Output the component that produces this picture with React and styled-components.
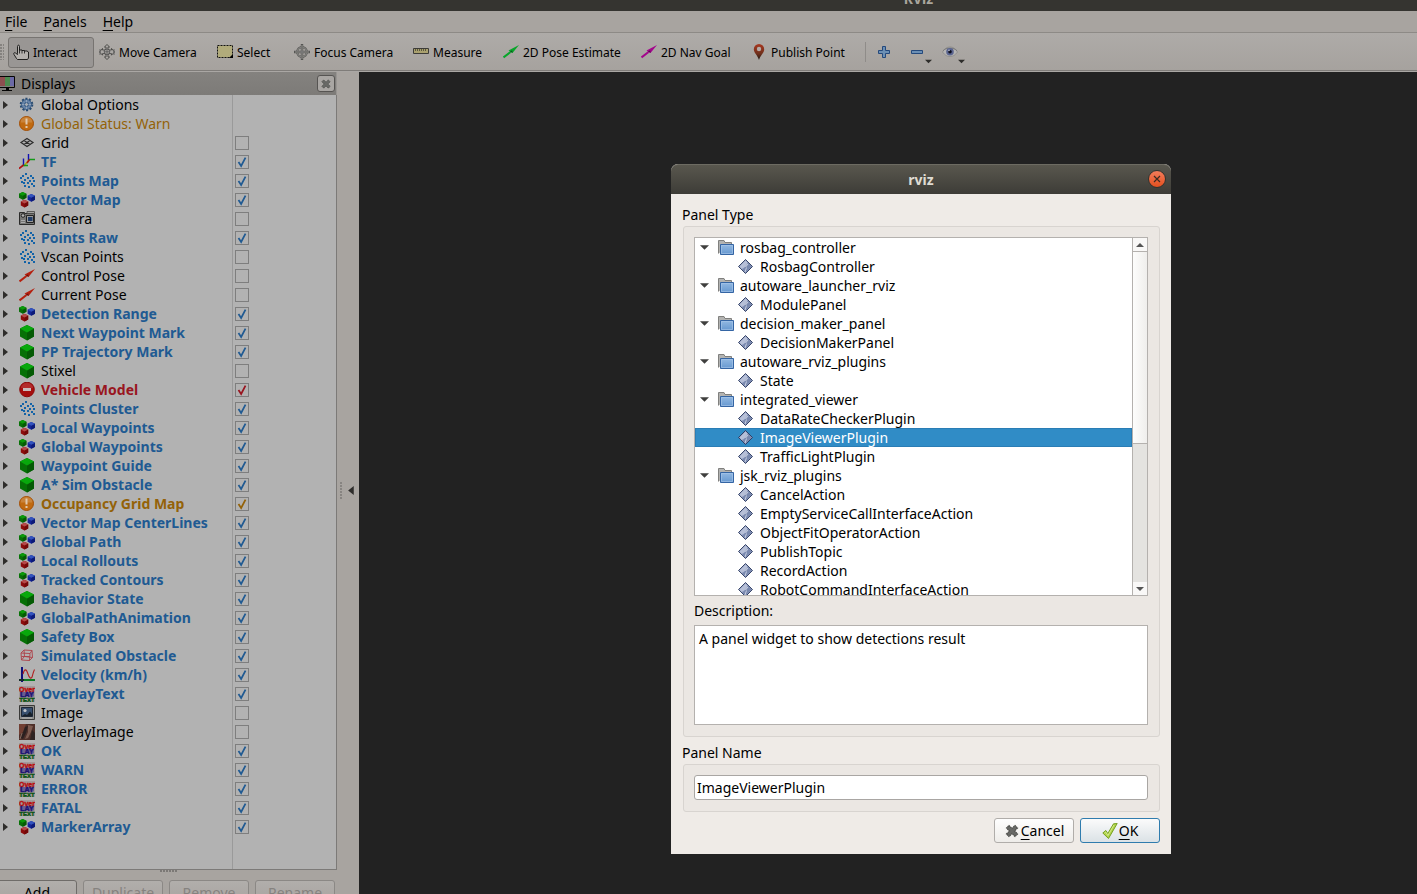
import React, { useState } from 'react';
import styled, { createGlobalStyle, css } from 'styled-components';

const GlobalStyle = createGlobalStyle`
  *,
  *:before,
  *:after {
    box-sizing: border-box;
  }

  body {
    margin: 0;
    overflow: hidden;
    background: #222;
    color: #000;
    font-family: 'Noto Sans', 'Open Sans', sans-serif;
    font-size: 14px;
    line-height: 19px;
  }

  button,
  input,
  textarea {
    color: inherit;
    font: inherit;
  }

  ul {
    margin: 0;
    padding: 0;
    list-style: none;
  }

  svg {
    display: block;
    flex: none;
  }
`;

const Icon = ({ size = 16, children, ...props }) => (
  <svg width={size} height={size} viewBox="0 0 16 16" fill="none" aria-hidden="true" {...props}>
    {children}
  </svg>
);

/* Toolbar icons */

const HandIcon = () => (
  <Icon>
    <path
      d="M4.500 9.500v-7c0-1.800 2-1.800 2 0V6h2.500v.5h2.500V7H14l1.500 1v6l-1 1.500H4.500l-1-1L1 10.500c-.8-1.500.3-2.200 1.500-1.500l2 1.500z"
      fill="#b4b1ae"
      stroke="#111"
      strokeWidth=".9"
    />
    <path d="M6.500 6v3.500M9 6.500v3M11.500 7v2.500" stroke="#111" strokeWidth=".8" />
  </Icon>
);

const MoveIcon = () => (
  <Icon>
    <path
      d="M8 .5 10.600 3H9v2.200l1 .8h2.500V4.400L15.500 8l-3 3.200V9.600H10L9 11v2h1.600L8 15.500 5.400 13H7v-2L6 9.600H3.500v1.600L.5 8l3-3.600V6H6l1-.8V3H5.400z"
      fill="#aaa7a4"
      stroke="#484846"
      strokeWidth=".9"
    />
    <circle cx="8" cy="7.800" r="2.800" stroke="#555" strokeWidth=".8" />
    <path d="M1 5v6M15 5v6M5 7.800h6M8 5v6" stroke="#555" strokeWidth=".8" />
  </Icon>
);

const SelectIcon = () => (
  <Icon>
    <path d="M.5 1.500h15v12H.5z" fill="#b1ab7b" stroke="#111" strokeDasharray="2 1" />
    <path d="M16 10v4h-4z" fill="#000" />
  </Icon>
);

const FocusIcon = () => (
  <Icon>
    <circle cx="8" cy="8" r="4.800" stroke="#555553" strokeWidth="2.200" />
    <circle cx="8" cy="8" r="4.800" stroke="#a6a4a1" strokeWidth=".8" />
    <path d="M8 0v16M0 8h16" stroke="#555553" strokeWidth="2.400" />
    <path d="M8 1v14M1 8h14" stroke="#a6a4a1" strokeWidth=".8" />
    <circle cx="8" cy="8" r="1.600" fill="#777" />
  </Icon>
);

const RulerIcon = () => (
  <Icon>
    <path d="M.5 4.500h15v5H.5z" fill="#aaa16f" stroke="#3d3c38" />
    <path d="M2.500 5v2M4.500 5v2M6.500 5v2M8.500 5v2M10.500 5v2M12.500 5v2" stroke="#5b583f" />
  </Icon>
);

const PoseIcon = ({ color, dark }) => (
  <Icon>
    <path d="m.5 13.500 7-5.500" stroke={color} strokeWidth="2" />
    <path d="M5.500 6.500 16 1 9.500 9z" fill={color} />
    <path d="m6.800 7.200 2.400-.7.300 2.500z" fill={dark} />
  </Icon>
);

const PinIcon = () => (
  <Icon>
    <defs>
      <linearGradient id="pin" x1="0" y1="0" x2="0" y2="1">
        <stop offset="0" stopColor="#a8371f" />
        <stop offset=".6" stopColor="#70301c" />
        <stop offset="1" stopColor="#1c1a15" />
      </linearGradient>
    </defs>
    <path d="M8 0a5.200 5.200 0 0 0-5.200 5.200C2.800 9 6.400 10.800 8 16c1.600-5.200 5.200-7 5.200-10.800A5.200 5.200 0 0 0 8 0z" fill="url(#pin)" />
    <circle cx="8" cy="5" r="2.200" fill="#b4aba7" />
  </Icon>
);

const PlusIcon = () => (
  <Icon>
    <path d="M6.500 2.500h3v4h4v3h-4v4h-3v-4h-4v-3h4z" fill="#6b8fb4" stroke="#24497c" />
  </Icon>
);

const MinusIcon = () => (
  <Icon>
    <path d="M2.500 6.500h11v3h-11z" fill="#6b8fb4" stroke="#24497c" />
  </Icon>
);

const EyeIcon = () => (
  <Icon>
    <path d="M.5 8C3 4 5.500 3 8 3s5 1 7.500 5C13 11.500 10.500 12.500 8 12.500S3 11.500.5 8z" fill="#b5b4b3" stroke="#8a8987" strokeWidth=".8" />
    <path d="M1 6.800C4 3.200 12 3.200 15 6.800" stroke="#777" />
    <circle cx="8" cy="7.800" r="3.800" fill="#5a648f" />
    <circle cx="8" cy="7.800" r="1.800" fill="#0c0d1c" />
    <circle cx="7" cy="6.400" r=".8" fill="#b4b9cb" />
  </Icon>
);

/* Display icons */

const MonitorIcon = () => (
  <Icon>
    <path d="M0 1h5v9H0z" fill="#8d4f50" />
    <path d="M5 1h5v9H5z" fill="#4c8b50" />
    <path d="M10 1h5v9h-5z" fill="#6b69a5" />
    <path d="M-1 .5h15.500v11H-1" stroke="#050505" />
    <path d="M6 12h3v2H6z" fill="#050505" />
    <path d="M2 14.500h10" stroke="#050505" />
  </Icon>
);

const GearIcon = () => (
  <Icon>
    <circle cx="7.500" cy="7.500" r="5.600" stroke="#27496f" strokeWidth="2.400" strokeDasharray="2 1.520" />
    <circle cx="7.500" cy="7.500" r="5" fill="#6783a6" stroke="#31557f" strokeWidth=".8" />
    <circle cx="7.500" cy="7.500" r="2" fill="#a8adb3" stroke="#31557f" />
    <path d="M7.500 3v2.500M7.500 9.500V12M3 7.500h2.500M9.500 7.500H12" stroke="#9fb0c4" strokeWidth=".7" />
  </Icon>
);

const WarnIcon = () => (
  <Icon>
    <circle cx="7.500" cy="7.500" r="7" fill="#c06a10" stroke="#a34f05" />
    <path d="M1.500 6.500a6 5.500 0 0 1 12 0z" fill="#c98339" />
    <path d="M7.500 2.500v6M7.500 10v2" stroke="#e0c9b0" strokeWidth="2" />
  </Icon>
);

const ErrorIcon = () => (
  <Icon>
    <circle cx="8" cy="7.500" r="7.300" fill="#a50e0e" stroke="#8b0909" />
    <path d="M2 6a6 5 0 0 1 12 0z" fill="#b32b2b" />
    <path d="M4 6h8v3H4z" fill="#c9bcbc" />
  </Icon>
);

const GridIcon = () => (
  <Icon>
    <path d="M8 3.500 14 7.500 8 11.500 2 7.500zM5 5.500l6 4M11 5.500l-6 4" stroke="#2b2b2b" strokeWidth="1.200" />
  </Icon>
);

const AxesIcon = () => (
  <Icon>
    <path d="m10 6-5 6" stroke="#b4a800" strokeWidth="1.600" />
    <path d="M4.500 11V4.500M9.500 6V0" stroke="#1112b5" strokeWidth="1.400" />
    <path d="M10 5.500h6M4 11.500h5" stroke="#149a18" strokeWidth="1.400" />
    <path d="M4.500 11 0 14.500M10.500 5.500 8 9" stroke="#b01010" strokeWidth="1.600" />
  </Icon>
);

const POINTS = [
  [6, 0], [3, 2], [11, 2], [1, 4], [8, 4], [13, 4], [5, 6], [10, 7],
  [2, 8], [14, 7], [4, 9], [8, 9], [12, 10], [5, 12], [9, 13], [14, 12],
];

const PointsIcon = () => (
  <Icon>
    {POINTS.map(([x, y]) => (
      <rect key={`${x}-${y}`} x={x} y={y} width="2" height="2" fill="#1263a8" />
    ))}
  </Icon>
);

const Hexagon = ({ x, y, top, left, right }) => (
  <g transform={`translate(${x} ${y})`}>
    <path d="M0-3.800 3.700-2v4L0 4-3.700 2v-4z" fill={left} />
    <path d="M0 0 3.700-2v4L0 4z" fill={right} />
    <path d="M0-3.800 3.700-2 0 0l-3.700-2z" fill={top} />
  </g>
);

const MarkersIcon = () => (
  <Icon>
    <Hexagon x={3.7} y={3.8} top="#0a9a0a" left="#087008" right="#055a05" />
    <Hexagon x={12.3} y={5.8} top="#3353bd" left="#14259a" right="#0c1a78" />
    <Hexagon x={5.5} y={11.6} top="#b44a4a" left="#8c0c0c" right="#730808" />
  </Icon>
);

const CubeIcon = () => (
  <Icon>
    <path d="M8 0 15 3.500v8L8 15.500l-7-4v-8z" fill="#067006" />
    <path d="M8 7.500 15 3.500v8L8 15.500z" fill="#045a04" />
    <path d="M8 0 15 3.500 8 7.500 1 3.500z" fill="#08a80c" />
  </Icon>
);

const CameraIcon = () => (
  <Icon>
    <path d="M.5 1.500h5v1h10v11H.5z" fill="#777775" stroke="#2b2b2a" />
    <path d="M8 .5h7.500v2H8z" fill="#a3a3a1" stroke="#444" strokeWidth=".8" />
    <circle cx="4" cy="4.500" r="1.800" fill="#b5b5b3" stroke="#222" />
    <path d="M7.500 4.500h7v7h-7z" fill="#999" stroke="#222" />
    <path d="M9 6h4.500v4H9z" fill="#1f3b66" />
    <path d="M2 9.500h4M2 11.500h4" stroke="#aaa" />
  </Icon>
);

const WireBoxIcon = () => (
  <Icon>
    <path
      d="m2 5 3-3 8 .5-2 3zM2 5l.5 7 8 .5.5-7M13 2.500l.5 7-3 3M5 2l.5 6.500 8 1M5.500 8.500l-3 3.500M2.500 8.500h8"
      stroke="#ad3e46"
      strokeWidth=".9"
    />
  </Icon>
);

const PlotIcon = () => (
  <Icon>
    <path d="M0 13h16" stroke="#0b7c23" strokeWidth="2" />
    <path d="M3 0v15" stroke="#10107a" strokeWidth="2" />
    <path d="M0 12h5v2H0z" fill="#142a2a" />
    <path d="M4 7c1.500-6 3.500-5 5 0s3.500 5.500 4.500 1.500c.6-2.300 1-4 2-6" stroke="#b02222" strokeWidth="1.100" />
  </Icon>
);

const OverlayTextIcon = () => (
  <Icon fontFamily="Liberation Sans, sans-serif" fontWeight="700" textAnchor="middle" strokeWidth=".4">
    <path d="M0 0h16v16H0z" fill="#a39a9a" />
    <path d="M1 6h14v4.500H1z" fill="#6a5c90" />
    <text x="8" y="5.500" fontSize="7" fill="#b80d0d" stroke="#b80d0d">Over</text>
    <text x="8" y="10.700" fontSize="7" fill="#1c1272" stroke="#1c1272">LAY</text>
    <text x="8" y="15.700" fontSize="6" fill="#0b5513" stroke="#0b5513">TEXT</text>
  </Icon>
);

const ImageIcon = () => (
  <Icon>
    <path d="M.5.500h15v14H.5z" fill="#8f8f8d" stroke="#3a3a38" />
    <path d="M2.500 2.500h11v9h-11z" fill="#38506f" stroke="#1d2736" />
    <circle cx="6" cy="5.500" r="1.600" fill="#c0c4c8" />
    <path d="m3 11 3-2 2 1 3-3.500L13 9v2z" fill="#17202a" />
    <path d="M3 13h10" stroke="#b5b5b5" />
  </Icon>
);

const PhotoIcon = () => (
  <Icon>
    <path d="M0 0h16v16H0z" fill="#4e2f29" />
    <path d="M0 0h7L4 8l-4 3z" fill="#713f33" />
    <path d="m9 1 5 1-2 6-3 6-3 1 3-7z" fill="#7d5b50" />
    <path d="m6 3 3-1-2 7-3 6-2-1z" fill="#2b2020" />
    <path d="m13 6 3 3v7h-5z" fill="#2f2322" />
    <path d="M3 9 1 15" stroke="#80665b" />
  </Icon>
);

/* Dialog icons */

const FolderIcon = () => (
  <Icon>
    <defs>
      <linearGradient id="folder" x1="0" y1="0" x2="0" y2="1">
        <stop offset="0" stopColor="#93b9e2" />
        <stop offset="1" stopColor="#6698d0" />
      </linearGradient>
    </defs>
    <path d="M.5 13.500V.5H6l1 2h6.500v3" fill="#b3b3b1" stroke="#80807e" />
    <path d="M2.500 4.500h13v10h-13z" fill="url(#folder)" stroke="#3465a4" />
    <path d="M3.500 5.500h11v8h-11z" stroke="#a9c8e9" strokeWidth=".6" />
  </Icon>
);

const DiamondIcon = () => (
  <Icon>
    <path d="m7.500.500 7 7-7 7-7-7z" fill="#8896ba" stroke="#28375c" strokeWidth=".9" />
    <path d="m7.500 1.500 2 2-1 4-5 2.500-2-2.500z" fill="#b7c0d8" />
    <path d="m10 4-5.500 7 3 2.500 6-6z" fill="#7282a9" opacity=".7" />
    <path d="m7.500 8 2.500-3M7 13l1.500-4.500" stroke="#dbe0ec" strokeWidth=".8" />
  </Icon>
);

const CrossIcon = props => (
  <Icon {...props}>
    <path
      d="m5 2.500 3 3 3-3L13.500 5l-3 3 3 3-2.500 2.500-3-3-3 3L2.500 11l3-3-3-3z"
      fill="#686966"
      stroke="#4c4d4a"
      strokeWidth="1.200"
      strokeDasharray="1.500 .5"
    />
  </Icon>
);

const ApplyIcon = () => (
  <Icon>
    <path d="m.8 10 3-2.500 2 3L11.500.8l3.700-.3-8.700 15z" fill="#b0d348" stroke="#6c9a16" strokeWidth=".9" />
    <path d="m2.500 10 1.200-1 2.200 3.500L12 2" stroke="#dcefa0" strokeWidth=".8" />
  </Icon>
);

const ArrowIcon = ({ d, size = 8, color = '#2e2d2b' }) => (
  <svg width={size} height={size} viewBox="0 0 8 8" aria-hidden="true">
    <path d={d} fill={color} />
  </svg>
);

const RIGHT = 'M1 0v8l5-4z';
const LEFT = 'M6 0v8L1 4z';
const UP = 'M0 6h8L4 2z';
const DOWN = 'M0 2h8L4 6z';

/* Data */

const TOOLS = [
  { label: 'Interact', icon: <HandIcon />, width: 86, active: true },
  { label: 'Move Camera', icon: <MoveIcon />, width: 118 },
  { label: 'Select', icon: <SelectIcon />, width: 77 },
  { label: 'Focus Camera', icon: <FocusIcon />, width: 119 },
  { label: 'Measure', icon: <RulerIcon />, width: 90 },
  { label: '2D Pose Estimate', icon: <PoseIcon color="#08a62a" dark="#0b5a1c" />, width: 138 },
  { label: '2D Nav Goal', icon: <PoseIcon color="#a3058c" dark="#5b0450" />, width: 110 },
  { label: 'Publish Point', icon: <PinIcon />, width: 114 },
];

const DISPLAYS = [
  ['Global Options', GearIcon, null],
  ['Global Status: Warn', WarnIcon, null, 'warn'],
  ['Grid', GridIcon, false],
  ['TF', AxesIcon, true],
  ['Points Map', PointsIcon, true],
  ['Vector Map', MarkersIcon, true],
  ['Camera', CameraIcon, false],
  ['Points Raw', PointsIcon, true],
  ['Vscan Points', PointsIcon, false],
  ['Control Pose', 'pose', false],
  ['Current Pose', 'pose', false],
  ['Detection Range', MarkersIcon, true],
  ['Next Waypoint Mark', CubeIcon, true],
  ['PP Trajectory Mark', CubeIcon, true],
  ['Stixel', CubeIcon, false],
  ['Vehicle Model', ErrorIcon, true, 'error'],
  ['Points Cluster', PointsIcon, true],
  ['Local Waypoints', MarkersIcon, true],
  ['Global Waypoints', MarkersIcon, true],
  ['Waypoint Guide', CubeIcon, true],
  ['A* Sim Obstacle', CubeIcon, true],
  ['Occupancy Grid Map', WarnIcon, true, 'warn'],
  ['Vector Map CenterLines', MarkersIcon, true],
  ['Global Path', MarkersIcon, true],
  ['Local Rollouts', MarkersIcon, true],
  ['Tracked Contours', MarkersIcon, true],
  ['Behavior State', CubeIcon, true],
  ['GlobalPathAnimation', MarkersIcon, true],
  ['Safety Box', CubeIcon, true],
  ['Simulated Obstacle', WireBoxIcon, true],
  ['Velocity (km/h)', PlotIcon, true],
  ['OverlayText', OverlayTextIcon, true],
  ['Image', ImageIcon, false],
  ['OverlayImage', PhotoIcon, false],
  ['OK', OverlayTextIcon, true],
  ['WARN', OverlayTextIcon, true],
  ['ERROR', OverlayTextIcon, true],
  ['FATAL', OverlayTextIcon, true],
  ['MarkerArray', MarkersIcon, true],
].map(([name, icon, enabled, status]) => ({ name, icon, enabled, status }));

const PACKAGES = [
  { name: 'rosbag_controller', panels: ['RosbagController'] },
  { name: 'autoware_launcher_rviz', panels: ['ModulePanel'] },
  { name: 'decision_maker_panel', panels: ['DecisionMakerPanel'] },
  { name: 'autoware_rviz_plugins', panels: ['State'] },
  {
    name: 'integrated_viewer',
    panels: ['DataRateCheckerPlugin', 'ImageViewerPlugin', 'TrafficLightPlugin'],
  },
  {
    name: 'jsk_rviz_plugins',
    panels: [
      'CancelAction',
      'EmptyServiceCallInterfaceAction',
      'ObjectFitOperatorAction',
      'PublishTopic',
      'RecordAction',
      'RobotCommandInterfaceAction',
    ],
  },
];

const STATUS_COLORS = { ok: '#205a92', warn: '#946208', error: '#991520' };

/* Main window */

const StyledWindow = styled.div`
  display: flex;
  flex-direction: column;
  height: 100vh;
  overflow: hidden;
`;

const TitleStrip = styled.header`
  display: flex;
  align-items: flex-end;
  justify-content: center;
  height: 11px;
  padding: 0 0 4px 420px;
  overflow: hidden;
  background: #353430;
  color: #aaa69d;
  font-weight: 700;
  line-height: 16px;
`;

const MenuBar = styled.nav`
  display: flex;
  gap: 16px;
  height: 22px;
  padding: 0 5px;
  border-bottom: 1px solid #8d8a86;
  background: #a8a4a0;
`;

const MenuItem = styled.button`
  padding: 0;
  border: 0;
  background: none;
`;

const Mnemonic = styled.span`
  text-decoration: underline;
  text-decoration-thickness: 1px;
  text-underline-offset: 3px;
`;

const Toolbar = styled.div`
  display: flex;
  align-items: center;
  height: 38px;
  padding-top: 1px;
  border-bottom: 1px solid #7f7c79;
  background: linear-gradient(#aeaba8, #a6a29e);
`;

const ToolbarGrip = styled.span`
  width: 4px;
  height: 16px;
  margin-right: 4px;
  background: radial-gradient(circle at 1px 1px, #85827f 1px, transparent 1px) 0 0 / 3px 3px;
`;

const ToolButton = styled.button`
  display: flex;
  align-items: center;
  gap: 4px;
  flex: none;
  width: ${({ $width }) => $width}px;
  height: 31px;
  padding: 0 4px;
  border: 1px solid transparent;
  border-radius: 3px;
  background: none;
  font-size: 12px;
  white-space: nowrap;

  ${({ $active }) =>
    $active &&
    css`
      border-color: #777471;
      background: #999694;
    `}
`;

const ToolSeparator = styled.span`
  width: 1px;
  height: 20px;
  margin: 0 6px 0 5px;
  background: #8f8c89;
`;

const IconButton = styled.button`
  display: flex;
  align-items: flex-end;
  width: 33px;
  padding: 0 0 0 4px;
  border: 0;
  background: none;

  > svg + svg {
    margin-bottom: -5px;
  }
`;

const Workspace = styled.main`
  display: flex;
  flex: 1;
  min-height: 0;
  border-top: 1px solid #aaa7a4;
`;

/* Displays panel */

const DisplaysPanel = styled.section`
  display: flex;
  flex-direction: column;
  width: 337px;
  flex: none;
  background: #a8a4a0;
`;

const PanelHeader = styled.div`
  display: flex;
  align-items: center;
  gap: 5px;
  height: 23px;
  flex: none;
  padding-right: 1px;
  border-right: 1px solid #989592;
  background: linear-gradient(#84827f, #7d7b78);
`;

const PanelTitle = styled.h2`
  flex: 1;
  margin: 0;
  font-size: 14px;
  font-weight: 400;
`;

const PanelClose = styled.button`
  display: grid;
  place-items: center;
  width: 18px;
  height: 17px;
  padding: 0;
  border: 1px solid #565452;
  border-radius: 3px;
  background: #a9a6a3;
`;

const DisplayTree = styled.ul`
  height: 775px;
  flex: none;
  border: solid #7c7a78;
  border-width: 0 1px 1px 0;
  background: linear-gradient(#9a9a9a, #9a9a9a) 232px 0 / 1px 100% no-repeat #b2b2b2;
`;

const DisplayRow = styled.li`
  display: flex;
  align-items: center;
  height: 19px;
  padding-left: 2px;
  color: ${({ $color }) => $color};
  font-weight: ${({ $enabled }) => ($enabled ? 700 : 400)};
`;

const DisplayName = styled.label`
  display: flex;
  align-items: center;
  gap: 6px;
  width: 225px;
  padding-left: 9px;
  white-space: nowrap;
`;

const CheckCell = styled.span`
  display: grid;
  place-items: center;

  > * {
    grid-area: 1 / 1;
  }

  svg {
    pointer-events: none;
  }
`;

const Checkbox = styled.input`
  width: 14px;
  height: 14px;
  margin: 0;
  appearance: none;
  border: 1px solid #7e7e7e;
  background: #b2b2b2;
`;

const SplitGrip = styled.span`
  align-self: center;
  flex: none;
  width: 17px;
  height: 10px;
  background: radial-gradient(circle at 1px 1px, #7c7976 1px, transparent 1px) 0 0 / 3px 10px;
`;

const PanelActions = styled.div`
  display: flex;
  gap: 6px;
  margin-left: -3px;
`;

const PanelButton = styled.button`
  width: 80px;
  height: 25px;
  padding: 0;
  border: 1px solid #6f6c69;
  border-radius: 3px;
  background: linear-gradient(#b1aeab, #a8a4a0);

  &:disabled {
    border-color: #8b8885;
    color: #85827f;
  }
`;

const Splitter = styled.div`
  display: flex;
  align-items: center;
  gap: 5px;
  width: 22px;
  flex: none;
  padding: 14px 3px 0;
  background: #a8a4a0;
`;

const SplitterDots = styled.span`
  width: 2px;
  height: 17px;
  background: radial-gradient(circle at 1px 1px, #878481 1px, transparent 1px) 0 0 / 2px 3px;
`;

/* Dialog */

const DialogWindow = styled.section`
  position: absolute;
  top: 164px;
  left: 671px;
  display: flex;
  flex-direction: column;
  width: 500px;
  border-radius: 7px 7px 0 0;
  background: #efebe7;
`;

const DialogTitle = styled.header`
  display: grid;
  grid-template-columns: 1fr auto 1fr;
  align-items: center;
  height: 30px;
  padding: 0 5px 1px;
  border-top: 1px solid #6d6b62;
  border-radius: 7px 7px 0 0;
  background: linear-gradient(#59574e, #3d3c37);
  color: #dfdbd2;

  h1 {
    grid-column: 2;
    margin: 0;
    font-size: 14px;
  }
`;

const DialogClose = styled.button`
  display: grid;
  place-items: center;
  justify-self: end;
  width: 18px;
  height: 18px;
  padding: 0;
  border: 1px solid #33322e;
  border-radius: 50%;
  background: linear-gradient(#f37c5b, #e4501f);
`;

const DialogBody = styled.form`
  padding: 11px 11px 11px 12px;
`;

const GroupLabel = styled.label`
  display: block;
  margin: 0 0 2px -1px;
`;

const Group = styled.div`
  margin-bottom: 6px;
  padding: 10px 11px 11px 10px;
  border: 1px solid #d8d4d0;
  border-radius: 3px;
  background: #ebe7e3;
`;

const TypeBox = styled.div`
  display: flex;
  height: 359px;
  border: 1px solid #b4b1ae;
  background: #fff;
`;

const TypeTree = styled.ul`
  flex: 1;
  overflow: hidden;
`;

const TypeRow = styled.div`
  display: flex;
  align-items: center;
  gap: 6px;
  height: 19px;
  padding-left: ${({ $child }) => ($child ? 43 : 5)}px;

  ${({ $selected }) =>
    $selected &&
    css`
      box-shadow: inset 0 0 0 1px #2a7db5;
      background: #308cc6;
      color: #fff;
    `}

  > svg + svg {
    margin-left: 3px;
  }
`;

const ScrollBar = styled.div`
  display: flex;
  flex-direction: column;
  width: 15px;
  border-left: 1px solid #b4b1ae;
  background: #e4e3e0;
`;

const ScrollButton = styled.button`
  display: grid;
  place-items: center;
  height: 13px;
  padding: 0;
  border: 0;
  background: #f9f8f7;
`;

const ScrollThumb = styled.div`
  height: 193px;
  margin-bottom: auto;
  border: solid #b4b1ae;
  border-width: 1px 0;
  background: linear-gradient(90deg, #fdfdfc, #efeeec);
`;

const DescriptionLabel = styled.label`
  display: block;
  padding: 5px 0;
`;

const Description = styled.textarea`
  display: block;
  width: 100%;
  height: 100px;
  padding: 3px 4px;
  border: 1px solid #b4b1ae;
  outline: 0;
  background: #fff;
  resize: none;
`;

const NameInput = styled.input`
  display: block;
  width: 100%;
  height: 25px;
  padding: 0 2px;
  border: 1px solid #a9a6a3;
  border-radius: 3px;
  outline: 0;
  background: #fff;
`;

const DialogActions = styled.div`
  display: flex;
  justify-content: flex-end;
  gap: 6px;
`;

const DialogButton = styled.button`
  display: flex;
  align-items: center;
  justify-content: center;
  gap: 1px;
  width: 80px;
  height: 25px;
  padding: 0;
  border: 1px solid ${({ $default }) => ($default ? '#2f7cae' : '#b0adaa')};
  border-radius: 3px;
  background: ${({ $default }) =>
    $default ? 'linear-gradient(#fbfbfb, #dbe2e6)' : 'linear-gradient(#fefefe, #eeece9)'};
`;

const WithMnemonic = ({ text }) => (
  <span>
    <Mnemonic>{text[0]}</Mnemonic>
    {text.slice(1)}
  </span>
);

const Display = ({ display }) => {
  const { name, icon: DisplayIcon, enabled, status } = display;
  const [checked, setChecked] = useState(Boolean(enabled));
  const hasCheckbox = enabled !== null;
  const id = `display-${name.replace(/\W+/g, '-')}`;
  const markColor = STATUS_COLORS[status || 'ok'];
  const color = status || checked ? markColor : '#000';

  return (
    <DisplayRow $enabled={checked} $color={color}>
      <ArrowIcon d={RIGHT} />
      <DisplayName as={hasCheckbox ? 'label' : 'span'} htmlFor={hasCheckbox ? id : undefined}>
        {DisplayIcon === 'pose' ? <PoseIcon color="#b5200f" dark="#6b0f08" /> : <DisplayIcon />}
        {name}
      </DisplayName>
      {hasCheckbox && (
        <CheckCell>
          <Checkbox id={id} type="checkbox" checked={checked} onChange={() => setChecked(!checked)} />
          {checked && (
            <Icon size={14}>
              <path d="m4 8 3 4.500 5-9.500" stroke={markColor} strokeWidth="2" />
            </Icon>
          )}
        </CheckCell>
      )}
    </DisplayRow>
  );
};

const PanelDialog = () => {
  const [selected, setSelected] = useState('ImageViewerPlugin');
  const [panelName, setPanelName] = useState('ImageViewerPlugin');

  const select = panel => {
    setSelected(panel);
    setPanelName(panel);
  };

  return (
    <DialogWindow role="dialog" aria-labelledby="dialog-title">
      <DialogTitle>
        <h1 id="dialog-title">rviz</h1>
        <DialogClose type="button" aria-label="Close">
          <svg width="8" height="8" viewBox="0 0 8 8">
            <path d="m1 1 6 6m0-6-6 6" stroke="#3b2a22" strokeWidth="1.200" />
          </svg>
        </DialogClose>
      </DialogTitle>

      <DialogBody onSubmit={e => e.preventDefault()}>
        <GroupLabel as="div" id="panel-type">
          Panel Type
        </GroupLabel>
        <Group>
          <TypeBox>
            <TypeTree role="tree" aria-labelledby="panel-type">
              {PACKAGES.map(({ name, panels }) => (
                <li key={name} role="treeitem" aria-expanded="true" aria-selected="false">
                  <TypeRow>
                    <ArrowIcon d={DOWN} size={9} color="#3f3f3e" />
                    <FolderIcon />
                    <span>{name}</span>
                  </TypeRow>
                  <ul role="group">
                    {panels.map(panel => (
                      <TypeRow
                        as="li"
                        key={panel}
                        role="treeitem"
                        aria-selected={panel === selected}
                        $child
                        $selected={panel === selected}
                        onClick={() => select(panel)}>
                        <DiamondIcon />
                        <span>{panel}</span>
                      </TypeRow>
                    ))}
                  </ul>
                </li>
              ))}
            </TypeTree>
            <ScrollBar>
              <ScrollButton type="button" aria-label="Scroll up">
                <ArrowIcon d={UP} color="#555" />
              </ScrollButton>
              <ScrollThumb />
              <ScrollButton type="button" aria-label="Scroll down">
                <ArrowIcon d={DOWN} color="#555" />
              </ScrollButton>
            </ScrollBar>
          </TypeBox>
          <DescriptionLabel htmlFor="description">Description:</DescriptionLabel>
          <Description id="description" readOnly value="A panel widget to show detections result" />
        </Group>

        <GroupLabel htmlFor="panel-name">Panel Name</GroupLabel>
        <Group>
          <NameInput
            id="panel-name"
            type="text"
            spellCheck={false}
            value={panelName}
            onChange={e => setPanelName(e.target.value)}
          />
        </Group>

        <DialogActions>
          <DialogButton type="button">
            <CrossIcon />
            <WithMnemonic text="Cancel" />
          </DialogButton>
          <DialogButton type="submit" $default>
            <ApplyIcon />
            <WithMnemonic text="OK" />
          </DialogButton>
        </DialogActions>
      </DialogBody>
    </DialogWindow>
  );
};

const App = () => (
  <>
    <GlobalStyle />
    <StyledWindow>
      <TitleStrip>RViz</TitleStrip>

      <MenuBar>
        {['File', 'Panels', 'Help'].map(item => (
          <MenuItem key={item} type="button">
            <WithMnemonic text={item} />
          </MenuItem>
        ))}
      </MenuBar>

      <Toolbar>
        <ToolbarGrip />
        {TOOLS.map(({ label, icon, width, active }) => (
          <ToolButton key={label} type="button" $width={width} $active={active}>
            {icon}
            {label}
          </ToolButton>
        ))}
        <ToolSeparator />
        <IconButton type="button" aria-label="Add tool">
          <PlusIcon />
        </IconButton>
        <IconButton type="button" aria-label="Remove tool">
          <MinusIcon />
          <ArrowIcon d={DOWN} size={7} />
        </IconButton>
        <IconButton type="button" aria-label="Tool visibility">
          <EyeIcon />
          <ArrowIcon d={DOWN} size={7} />
        </IconButton>
      </Toolbar>

      <Workspace>
        <DisplaysPanel>
          <PanelHeader>
            <MonitorIcon />
            <PanelTitle>Displays</PanelTitle>
            <PanelClose type="button" aria-label="Close panel">
              <CrossIcon size={12} />
            </PanelClose>
          </PanelHeader>
          <DisplayTree>
            {DISPLAYS.map(display => (
              <Display key={display.name} display={display} />
            ))}
          </DisplayTree>
          <SplitGrip />
          <PanelActions>
            <PanelButton type="button">Add</PanelButton>
            <PanelButton type="button" disabled>
              Duplicate
            </PanelButton>
            <PanelButton type="button" disabled>
              Remove
            </PanelButton>
            <PanelButton type="button" disabled>
              Rename
            </PanelButton>
          </PanelActions>
        </DisplaysPanel>
        <Splitter>
          <SplitterDots />
          <ArrowIcon d={LEFT} size={9} />
        </Splitter>
      </Workspace>
    </StyledWindow>

    <PanelDialog />
  </>
);

export default App;
